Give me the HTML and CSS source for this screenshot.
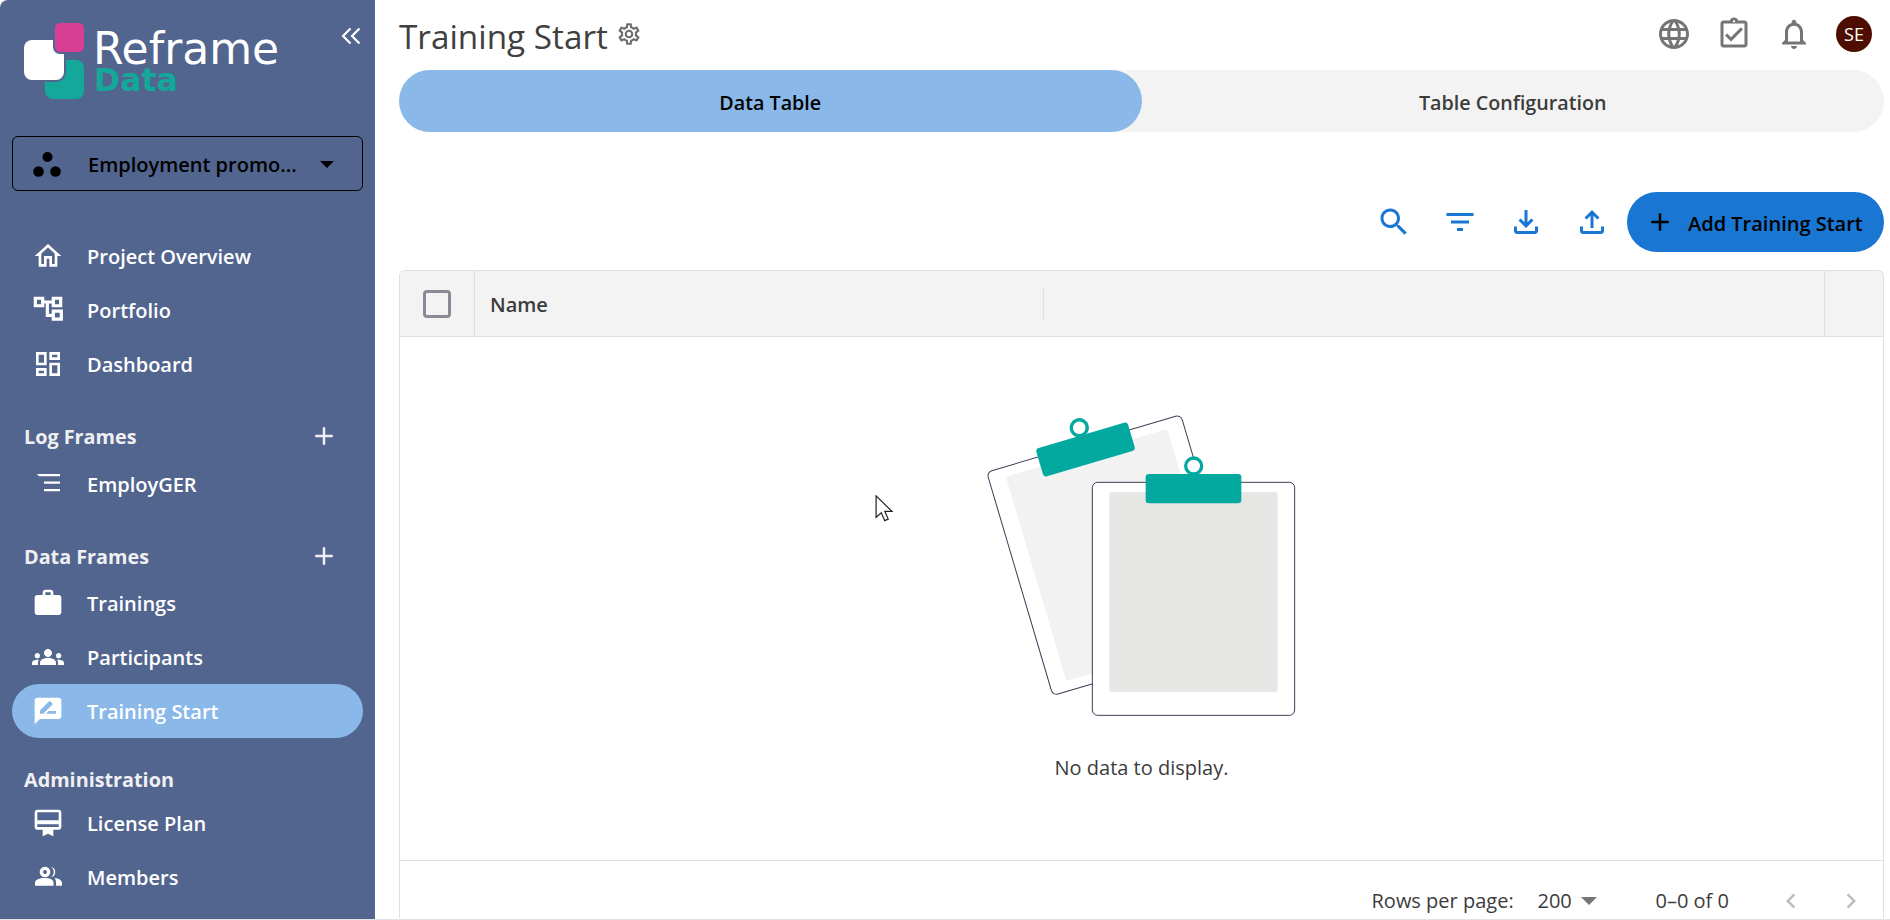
FILE: index.html
```html
<!DOCTYPE html>
<html lang="en">
<head>
<meta charset="utf-8">
<title>Training Start</title>
<link rel="stylesheet" href="styles.css">
</head>
<body>
<div class="app">
  <aside class="sidebar">
    <div class="brand">
      <div class="logo-mark">
        <span class="sq sq-teal"></span>
        <span class="sq sq-white"></span>
        <span class="sq sq-pink"></span>
      </div>
      <div class="wordmark">
        <span class="word-top">Reframe</span>
        <span class="word-bottom">Data</span>
      </div>
      <svg class="collapse" viewBox="0 0 20 18"><path d="M9.5 1.5 2 9l7.5 7.5M18.5 1.5 11 9l7.5 7.5" fill="none" stroke="#fff" stroke-width="2.2"/></svg>
    </div>
    <div class="project-select">
      <svg class="project-icon" viewBox="0 0 28 25"><circle cx="14.5" cy="5" r="5"/><circle cx="5.5" cy="19.5" r="5.3"/><circle cx="22.5" cy="19.5" r="5.3"/></svg>
      <span class="project-name">Employment promo...</span>
      <span class="caret"></span>
    </div>
    <nav class="nav">
      <a class="item"><svg class="ico" viewBox="0 0 24 24"><path d="M12 5.69l5 4.5V18h-2v-6H9v6H7v-7.81l5-4.5M12 3L2 12h3v8h6v-6h2v6h6v-8h3L12 3z"/></svg>Project Overview</a>
      <a class="item"><svg class="ico" viewBox="0 0 24 24"><path fill="none" stroke="#fff" stroke-width="2.400" d="M2.500 3.200h5.500v5.600H2.500zM16 3.200h5.500v5.600H16zM16 12.800h6v6H16zM8 6h8M11.500 6v10H16"/></svg>Portfolio</a>
      <a class="item"><svg class="ico" viewBox="0 0 24 24"><path d="M19 5v2h-4V5h4M9 5v6H5V5h4m10 8v6h-4v-6h4M9 17v2H5v-2h4M21 3h-8v6h8V3zM11 3H3v10h8V3zm10 8h-8v10h8V11zm-10 4H3v6h8v-6z"/></svg>Dashboard</a>
      <div class="heading log-heading"><span>Log Frames</span><svg class="plus" viewBox="0 0 24 24"><path d="M19 13h-6v6h-2v-6H5v-2h6V5h2v6h6v2z"/></svg></div>
      <a class="item"><svg class="ico" viewBox="0 0 24 24"><path d="M3.500 4.500H21v1.700H5.500zM9 10.100h12v1.700H9zM9 15.700h12v1.700H9z"/></svg>EmployGER</a>
      <div class="heading data-heading"><span>Data Frames</span><svg class="plus" viewBox="0 0 24 24"><path d="M19 13h-6v6h-2v-6H5v-2h6V5h2v6h6v2z"/></svg></div>
      <a class="item after-data"><svg class="ico" viewBox="0 0 24 24"><path d="M20 6h-4V4c0-1.110-.89-2-2-2h-4c-1.110 0-2 .89-2 2v2H4c-1.110 0-1.990.89-1.990 2L2 19c0 1.110.89 2 2 2h16c1.110 0 2-.89 2-2V8c0-1.110-.89-2-2-2zm-6 0h-4V4h4v2z"/></svg>Trainings</a>
      <a class="item"><svg class="ico" viewBox="0 0 24 24"><path d="M12 12.750c1.630 0 3.070.39 4.240.9 1.080.48 1.760 1.560 1.760 2.730V18H6v-1.610c0-1.180.68-2.260 1.760-2.730 1.170-.52 2.610-.91 4.240-.91zM4 13c1.100 0 2-.9 2-2s-.9-2-2-2-2 .9-2 2 .9 2 2 2zm1.130 1.100C4.760 14.040 4.390 14 4 14c-.99 0-1.930.21-2.780.58C.48 14.900 0 15.620 0 16.430V18h4.500v-1.610c0-.83.23-1.610.63-2.290zM20 13c1.100 0 2-.9 2-2s-.9-2-2-2-2 .9-2 2 .9 2 2 2zm4 3.430c0-.81-.48-1.530-1.220-1.850C21.930 14.210 20.990 14 20 14c-.39 0-.76.04-1.130.1.4.68.63 1.460.63 2.290V18H24v-1.570zM12 6c1.660 0 3 1.340 3 3s-1.340 3-3 3-3-1.340-3-3 1.340-3 3-3z"/></svg>Participants</a>
      <a class="item active"><svg class="ico" viewBox="0 0 24 24"><path d="M20 2H4c-1.100 0-2 .9-2 2v18l4-4h14c1.100 0 2-.9 2-2V4c0-1.100-.9-2-2-2zM6 14v-2.470l6.880-6.880c.2-.2.51-.2.71 0l1.770 1.770c.2.2.2.51 0 .71L8.470 14H6zm12 0h-7.500l2-2H18v2z"/></svg>Training Start</a>
      <div class="heading admin-heading"><span>Administration</span></div>
      <a class="item after-admin"><svg class="ico" viewBox="0 0 24 24"><path d="M20 2H4c-1.110 0-2 .89-2 2v11c0 1.110.89 2 2 2h4v5l4-2 4 2v-5h4c1.110 0 2-.89 2-2V4c0-1.110-.89-2-2-2zm0 13H4v-2h16v2zm0-5H4V4h16v6z"/></svg>License Plan</a>
      <a class="item"><svg class="ico" viewBox="0 0 24 24"><path fill-rule="evenodd" d="M9.750 12.250a4 4 0 1 0 0-8 4 4 0 0 0 0 8zm0-2.500a1.500 1.500 0 1 1 0-3 1.500 1.500 0 0 1 0 3zM2.200 18.500v-2c0-2.500 3.500-3.800 7.500-3.800s6.500 1.300 6.500 3.800v2zM14.300 4.300a4 4 0 0 1 0 7.800c1.300-1 2-2.400 2-3.900s-.7-2.900-2-3.900zM17 12.700c2.800.3 5.500 1.600 5.500 3.800v2H18v-2c0-1.500-.3-2.800-1-3.800z"/></svg>Members</a>
    </nav>
  </aside>

  <main class="main">
    <header class="topbar">
      <div class="title-wrap">
        <h1 class="title">Training Start</h1>
        <svg class="gear" viewBox="0 0 24 24"><path d="M19.430 12.980c.04-.32.07-.64.07-.98 0-.34-.03-.66-.07-.98l2.110-1.650c.19-.15.24-.42.12-.64l-2-3.460c-.09-.16-.26-.25-.44-.25-.06 0-.12.01-.17.03l-2.490 1c-.52-.4-1.080-.73-1.690-.98l-.38-2.650C14.460 2.180 14.250 2 14 2h-4c-.25 0-.46.18-.49.42l-.38 2.650c-.61.25-1.170.59-1.690.98l-2.490-1c-.06-.02-.12-.03-.18-.03-.17 0-.34.09-.43.25l-2 3.460c-.13.22-.07.49.12.64l2.110 1.650c-.04.32-.07.65-.07.98 0 .33.03.66.07.98l-2.110 1.650c-.19.15-.24.42-.12.64l2 3.460c.09.16.26.25.44.25.06 0 .12-.01.17-.03l2.490-1c.52.4 1.080.73 1.690.98l.38 2.650c.03.24.24.42.49.42h4c.25 0 .46-.18.49-.42l.38-2.650c.61-.25 1.170-.59 1.690-.98l2.490 1c.06.02.12.03.18.03.17 0 .34-.09.43-.25l2-3.460c.12-.22.07-.49-.12-.64l-2.110-1.650zm-1.980-1.710c.04.31.05.52.05.73 0 .21-.02.43-.05.73l-.14 1.130.89.7 1.080.84-.7 1.210-1.270-.51-1.040-.42-.9.68c-.43.32-.84.56-1.250.73l-1.060.43-.16 1.130-.2 1.350h-1.400l-.19-1.350-.16-1.130-1.060-.43c-.43-.18-.83-.41-1.230-.71l-.91-.7-1.060.43-1.270.51-.7-1.210 1.080-.84.89-.7-.14-1.130c-.03-.31-.05-.54-.05-.74s.02-.43.05-.73l.14-1.130-.89-.7-1.080-.84.7-1.210 1.270.51 1.040.42.9-.68c.43-.32.84-.56 1.250-.73l1.060-.43.16-1.130.2-1.350h1.390l.19 1.350.16 1.130 1.060.43c.43.18.83.41 1.230.71l.91.7 1.060-.43 1.270-.51.7 1.210-1.070.85-.89.7.14 1.130zM12 8c-2.210 0-4 1.790-4 4s1.790 4 4 4 4-1.790 4-4-1.790-4-4-4zm0 6c-1.100 0-2-.9-2-2s.9-2 2-2 2 .9 2 2-.9 2-2 2z"/></svg>
      </div>
      <div class="top-icons">
        <svg class="top-ico" viewBox="0 0 24 24"><path d="M11.990 2C6.470 2 2 6.480 2 12s4.470 10 9.990 10C17.520 22 22 17.520 22 12S17.520 2 11.990 2zm6.930 6h-2.950c-.32-1.250-.78-2.450-1.380-3.560 1.840.63 3.370 1.910 4.330 3.560zM12 4.040c.83 1.200 1.480 2.530 1.910 3.960h-3.820c.43-1.430 1.080-2.760 1.910-3.960zM4.260 14C4.100 13.360 4 12.690 4 12s.1-1.360.26-2h3.380c-.08.66-.14 1.320-.14 2 0 .68.06 1.340.14 2H4.260zm.82 2h2.950c.32 1.250.78 2.450 1.380 3.560-1.840-.63-3.370-1.900-4.330-3.560zm2.950-8H5.080c.96-1.660 2.490-2.930 4.330-3.560C8.810 5.550 8.350 6.750 8.030 8zM12 19.960c-.83-1.200-1.480-2.530-1.910-3.960h3.820c-.43 1.430-1.080 2.760-1.910 3.960zM14.340 14H9.660c-.09-.66-.16-1.320-.16-2 0-.68.07-1.350.16-2h4.680c.09.65.16 1.320.16 2 0 .68-.07 1.340-.16 2zm.25 5.560c.6-1.110 1.060-2.310 1.380-3.560h2.950c-.96 1.650-2.490 2.930-4.330 3.560zM16.360 14c.08-.66.14-1.320.14-2 0-.68-.06-1.340-.14-2h3.380c.16.64.26 1.310.26 2s-.1 1.360-.26 2h-3.380z"/></svg>
        <svg class="top-ico" viewBox="0 0 24 24"><path d="M17.990 9l-1.410-1.420-6.590 6.590-2.580-2.570-1.420 1.410 4 3.990zM19 3h-4.180C14.400 1.840 13.300 1 12 1c-1.300 0-2.400.84-2.820 2H5c-.14 0-.27.01-.4.04-.39.08-.74.28-1.010.55-.18.18-.33.4-.43.64-.1.23-.16.49-.16.77v14c0 .27.06.54.16.78s.25.45.43.64c.27.27.62.47 1.010.55.13.02.26.03.4.03h14c1.100 0 2-.9 2-2V5c0-1.100-.9-2-2-2zm-7-.25c.41 0 .75.34.75.75s-.34.75-.75.75-.75-.34-.75-.75.34-.75.75-.75zM19 19H5V5h14v14z"/></svg>
        <svg class="top-ico" viewBox="0 0 24 24"><path d="M12 22c1.100 0 2-.9 2-2h-4c0 1.100.9 2 2 2zm6-6v-5c0-3.070-1.630-5.640-4.500-6.320V4c0-.83-.67-1.500-1.500-1.500s-1.500.67-1.500 1.500v.68C7.640 5.360 6 7.920 6 11v5l-2 2v1h16v-1l-2-2zm-2 1H8v-6c0-2.480 1.510-4.500 4-4.500s4 2.020 4 4.500v6z"/></svg>
        <span class="avatar">SE</span>
      </div>
    </header>

    <div class="tabs">
      <div class="tab tab-on">Data Table</div>
      <div class="tab">Table Configuration</div>
    </div>

    <div class="toolbar">
      <svg class="tool" viewBox="0 0 24 24"><path d="M15.500 14h-.79l-.28-.27C15.410 12.590 16 11.110 16 9.500 16 5.910 13.090 3 9.500 3S3 5.910 3 9.500 5.910 16 9.500 16c1.610 0 3.090-.59 4.230-1.570l.27.28v.79l5 4.990L20.490 19l-4.990-5zm-6 0C7.010 14 5 11.990 5 9.500S7.010 5 9.500 5 14 7.010 14 9.500 11.990 14 9.500 14z"/></svg>
      <svg class="tool" viewBox="0 0 24 24"><path d="M10 18h4v-2h-4v2zM3 6v2h18V6H3zm3 7h12v-2H6v2z"/></svg>
      <svg class="tool" viewBox="0 0 24 24"><path d="M18 15v3H6v-3H4v3c0 1.100.9 2 2 2h12c1.100 0 2-.9 2-2v-3h-2zm-1-4l-1.410-1.410L13 12.170V4h-2v8.170L8.410 9.590 7 11l5 5 5-5z"/></svg>
      <svg class="tool" viewBox="0 0 24 24"><path d="M18 15v3H6v-3H4v3c0 1.100.9 2 2 2h12c1.100 0 2-.9 2-2v-3h-2zM7 9l1.410 1.410L11 7.830V16h2V7.830l2.590 2.580L17 9l-5-5-5 5z"/></svg>
      <div class="add-btn"><svg class="add-plus" viewBox="0 0 24 24"><path d="M19 13h-6v6h-2v-6H5v-2h6V5h2v6h6v2z"/></svg><span class="add-label">Add Training Start</span></div>
    </div>

    <section class="table">
      <div class="thead">
        <div class="th-check"><span class="checkbox"></span></div>
        <div class="th-name">Name</div>
        <div class="th-fill"></div>
        <div class="th-end"></div>
      </div>
      <div class="tbody">
        <svg class="empty-art" viewBox="0 0 1209 1080">
          <g transform="translate(-230 -131) rotate(-16.500 760.500 626.500)">
            <rect x="457" y="277" width="607" height="699" rx="16" fill="#fff" stroke="#3f3d56" stroke-width="3"/>
            <rect x="508" y="306" width="505" height="640" rx="9" fill="#f2f2f2"/>
            <circle cx="761" cy="228" r="24" fill="#fff" stroke="#03a89e" stroke-width="10"/>
            <rect x="617" y="252" width="287" height="88" rx="10" fill="#03a89e"/>
          </g>
          <rect x="457" y="277" width="607" height="699" rx="16" fill="#fff" stroke="#3f3d56" stroke-width="3"/>
          <rect x="508" y="306" width="505" height="600" rx="9" fill="#e6e6e4"/>
          <circle cx="761" cy="228" r="24" fill="#fff" stroke="#03a89e" stroke-width="10"/>
          <rect x="617" y="252" width="287" height="88" rx="10" fill="#03a89e"/>
        </svg>
        <p class="empty-text">No data to display.</p>
      </div>
      <div class="tfoot">
        <span class="rows-label">Rows per page:</span>
        <span class="rows-value">200</span>
        <span class="rows-caret"></span>
        <span class="range">0–0 of 0</span>
        <svg class="page-ico" viewBox="0 0 24 24"><path d="M15.410 7.410L14 6l-6 6 6 6 1.410-1.410L10.830 12z"/></svg>
        <svg class="page-ico page-next" viewBox="0 0 24 24"><path d="M10 6L8.590 7.410 13.170 12l-4.580 4.590L10 18l6-6z"/></svg>
      </div>
    </section>
  </main>
</div>
<svg class="cursor" viewBox="0 0 20 30"><path d="M1 1v23l5.500-5 3.800 8.500 3.700-1.700-3.700-8.300H18z" fill="#fff" stroke="#222" stroke-width="1.300"/></svg>
</body>
</html>
```

FILE: styles.css
```css
* { box-sizing: border-box; }
html, body { margin: 0; height: 100%; background: #fff; overflow: hidden; }
body { font-family: "Open Sans", "Noto Sans", sans-serif; color: #3c3c3c; }
.app { display: flex; height: 920px; border-bottom: 1px solid #e0e2e8; }

.sidebar { width: 375px; flex: none; background: #52658f; border-top-left-radius: 8px; padding: 0 12px; display: flex; flex-direction: column; }
.brand { height: 136px; position: relative; flex: none; }
.logo-mark { position: absolute; left: 12px; top: 23px; width: 60px; height: 76px; }
.sq { position: absolute; display: block; }
.sq-pink { left: 31px; top: 0; width: 29px; height: 29px; border-radius: 5px; background: #d63f93; box-shadow: 0 0 0 2px #52658f; }
.sq-teal { left: 21px; top: 37px; width: 39px; height: 39px; border-radius: 8px; background: #13a89a; }
.sq-white { left: 0; top: 17px; width: 40px; height: 40px; border-radius: 8px; background: #fff; box-shadow: 0 0 0 2px #52658f; }
.wordmark { position: absolute; left: 81px; top: 28px; display: flex; flex-direction: column; font-family: "DejaVu Sans", sans-serif; }
.word-top { color: #fff; font-size: 44px; line-height: 42px; }
.word-bottom { color: #13a89a; font-size: 31.5px; line-height: 26px; font-weight: 700; margin-top: -3px; margin-left: 1px; }
.collapse { position: absolute; right: 2px; top: 27px; width: 20px; height: 18px; }

.project-select { height: 55px; border: 1px solid #000; border-radius: 6px; display: flex; align-items: center; padding: 1px 0 0 20px; color: #000; flex: none; }
.project-icon { width: 28px; height: 25px; fill: #000; }
.project-name { margin-left: 27px; font-size: 20px; font-weight: 600; white-space: nowrap; }
.caret { margin-left: 23px; border-left: 7.5px solid transparent; border-right: 7.5px solid transparent; border-top: 7.5px solid #000; }

.nav { display: flex; flex-direction: column; margin-top: 38px; }
.item { height: 54px; display: flex; align-items: center; padding-left: 20px; color: #fff; font-size: 20px; font-weight: 600; border-radius: 27px; flex: none; }
.ico { width: 32px; height: 32px; fill: #fff; margin-right: 23px; flex: none; }
.item.active { background: #8ab8e9; }
.heading { height: 42px; display: flex; align-items: center; justify-content: space-between; padding: 0 24px 0 12px; color: #f0f0f2; font-size: 19.8px; font-weight: 700; flex: none; }
.log-heading { margin-top: 24px; }
.data-heading { margin-top: 24px; }
.admin-heading { margin-top: 20px; }
.item.after-data { margin-top: -1px; }
.item.after-admin { margin-top: -4px; }
.plus { width: 30px; height: 30px; fill: #f0f0f2; }

.main { flex: 1; min-width: 0; padding: 0 6px 0 24px; display: flex; flex-direction: column; }
.topbar { height: 70px; display: flex; justify-content: space-between; align-items: flex-start; flex: none; }
.title-wrap { display: flex; align-items: center; height: 70px; padding-top: 2px; }
.title { margin: 0; font-size: 33.3px; font-weight: 400; color: #404040; }
.gear { width: 26px; height: 26px; fill: #6e6e6e; margin-left: 8px; margin-bottom: 5px; }
.top-icons { display: flex; align-items: center; height: 68px; padding-right: 12px; }
.top-ico { width: 36px; height: 36px; fill: #757575; margin-right: 24px; }
.avatar { width: 36px; height: 36px; border-radius: 50%; background: #4d0d00; color: #fff; font-size: 18px; display: flex; align-items: center; justify-content: center; }

.tabs { height: 62px; display: flex; background: #f3f3f3; border-radius: 31px; flex: none; font-size: 19.7px; font-weight: 600; }
.tab { flex: 1; display: flex; align-items: center; justify-content: center; border-radius: 31px; padding-top: 2px; }
.tab-on { background: #8ab8e9; color: #000; }

.toolbar { height: 60px; margin-top: 60px; display: flex; align-items: center; justify-content: flex-end; flex: none; }
.tool { width: 36px; height: 36px; fill: #1976d2; margin-right: 30px; }
.add-btn { width: 257px; height: 60px; margin-left: -12.5px; border-radius: 30px; background: #1976d2; color: #000; display: flex; align-items: center; padding-left: 18px; font-size: 20px; font-weight: 600; white-space: nowrap; }
.add-plus { width: 30px; height: 30px; fill: #000; margin-right: 13px; }
.add-label { padding-top: 2px; }

.table { flex: none; height: 648px; margin-top: 18px; border: 1px solid #e0e0e0; border-bottom: 0; border-radius: 6px 6px 0 0; display: flex; flex-direction: column; }
.thead { height: 66px; flex: none; display: flex; background: #f3f3f3; border-bottom: 1px solid #e0e0e0; border-radius: 6px 6px 0 0; }
.th-check { width: 75px; border-right: 1px solid #e0e0e0; display: flex; align-items: center; justify-content: center; }
.checkbox { width: 28px; height: 28px; border: 3px solid #8a8a96; border-radius: 4px; }
.th-name { width: 569px; padding: 2px 0 0 15px; display: flex; align-items: center; font-size: 20px; font-weight: 600; position: relative; }
.th-name::after { content: ""; position: absolute; right: 0; top: 16px; bottom: 16px; width: 1px; background: #e0e0e0; }
.th-fill { flex: 1; }
.th-end { width: 59px; border-left: 1px solid #e0e0e0; }

.tbody { flex: 1; display: flex; flex-direction: column; align-items: center; padding-top: 53px; }
.empty-art { width: 403px; height: 360px; flex: none; }
.empty-text { margin: 4px 0 0; font-size: 20px; line-height: 28px; color: #3c3c3c; }

.tfoot { height: 58px; flex: none; border-top: 1px solid #e0e0e0; display: flex; align-items: center; padding-top: 22px; font-size: 20px; color: #3c3c3c; }
.rows-label { margin-left: 971.5px; width: 166px; }
.rows-value { width: 43px; }
.rows-caret { border-left: 8px solid transparent; border-right: 8px solid transparent; border-top: 8px solid #757575; margin-right: 59px; }
.range { width: 120px; }
.page-ico { width: 30px; height: 30px; fill: #bdbdbd; }
.page-next { margin-left: 30px; }

.cursor { position: absolute; left: 875px; top: 495px; width: 19px; height: 28px; }
```
